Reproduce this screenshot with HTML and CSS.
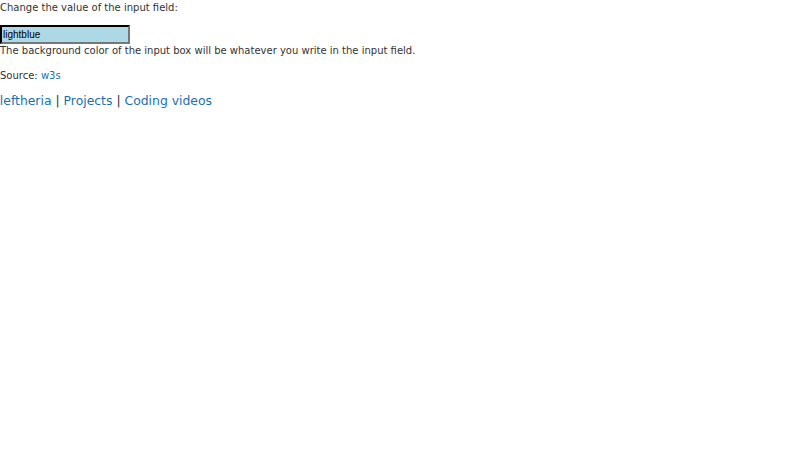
FILE: index.html
```html
<!DOCTYPE html>
<html>
<head>
<meta charset="utf-8">
<link rel="stylesheet" href="styles.css">
</head>
<body>
<p class="intro">Change the value of the input field:</p>
<input class="field" type="text" value="lightblue">
<p class="note">The background color of the input box will be whatever you write in the input field.</p>
<p class="source">Source: <a href="#">w3s</a></p>
<p class="links"><a href="#">Eleftheria</a> | <a href="#">Projects</a> | <a href="#">Coding videos</a></p>
</body>
</html>
```
FILE: styles.css
```css
html, body {
  margin: 0;
  padding: 0;
  background: #fff;
}
body {
  font-family: "DejaVu Sans", sans-serif;
  font-size: 10px;
  color: #333;
}
p {
  margin: 0;
}
a {
  color: #1a6fb0;
  text-decoration: none;
}
.intro {
  line-height: 14px;
  padding-top: 1px;
  margin-bottom: 10px;
}
.field {
  display: block;
  box-sizing: border-box;
  width: 130px;
  height: 19px;
  margin: 0;
  padding: 0 1px;
  border: 2px inset #555;
  border-color: #222 #777 #777 #222;
  background: lightblue;
  font-family: "Liberation Sans", Arial, sans-serif;
  font-size: 10px;
  color: #000;
}
.note {
  line-height: 14px;
  margin-bottom: 11px;
}
.source {
  line-height: 14px;
  margin-bottom: 9px;
}
.links {
  font-size: 12.4px;
  line-height: 17px;
  margin-left: -8px;
}
```
